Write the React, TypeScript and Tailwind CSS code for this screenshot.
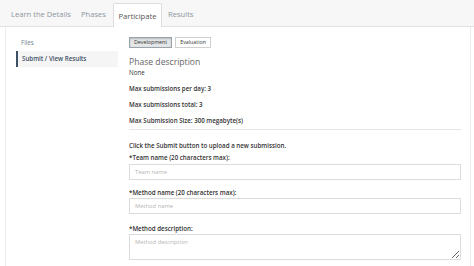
import React from 'react';

const tabs = [
  { label: 'Learn the Details', w: 'w-[70px]' },
  { label: 'Phases', w: 'w-[38px]' },
  { label: 'Participate', w: 'w-[49px]' },
  { label: 'Results', w: 'w-[40px]' },
];

const App: React.FC = () => {
  const active = 'Participate';

  return (
    <div className="w-[474px] h-[266px] overflow-hidden bg-white font-['Open_Sans',sans-serif] text-[#333]">
      {/* Tab strip */}
      <div className="h-[27px] bg-[#f7f7f7] border-b border-[#e0e0e0] flex items-end pl-[5px]">
        {tabs.map((t) =>
          t.label === active ? (
            <div
              key={t.label}
              className={`${t.w} h-[24px] pt-[2px] -mb-px bg-white border border-b-0 border-[#dddddd] rounded-t-[2px] flex items-center justify-center whitespace-nowrap text-[7.6px] text-[#555]`}
            >
              {t.label}
            </div>
          ) : (
            <div key={t.label} className={`${t.w} h-[24px] pt-[2px] flex items-center pl-[6px] whitespace-nowrap text-[7.6px] text-[#8c96a0]`}>
              {t.label}
            </div>
          )
        )}
      </div>

      {/* Panel */}
      <div className="flex ml-[5px] mr-[3px] h-[239px] border-l border-r border-[#ececec]">
        {/* Sidebar */}
        <div className="w-[112px] pl-[10px] pt-[8px] shrink-0">
          <div className="h-[16px] flex items-center pl-[5px] text-[6.2px] text-[#6f7f90]">Files</div>
          <div className="h-[16px] flex items-center pl-[4px] border-l-2 border-[#3d5166] bg-[#f5f5f5] text-[6.2px] font-semibold text-[#3d5166]">
            Submit / View Results
          </div>
        </div>

        {/* Main */}
        <div className="ml-[11px] w-[332px] pt-[10px] text-[6.2px] text-[#333]">
          <div className="flex gap-[3px]">
            <button className="h-[11px] px-[4px] border border-[#9aa3ab] bg-[#e4e6e8] shadow-[inset_0_1px_2px_rgba(0,0,0,0.2)] text-[5.3px] leading-none text-[#333]">
              Development
            </button>
            <button className="h-[11px] px-[4px] border border-[#d0d0d0] bg-white text-[5.3px] leading-none text-[#333]">
              Evaluation
            </button>
          </div>

          <div className="mt-[8px] text-[8.6px] leading-[12px] text-[#666]">Phase description</div>
          <div className="leading-[9px]">None</div>

          <div className="mt-[4px] h-[16px] flex items-center font-semibold">Max submissions per day: 3</div>
          <div className="h-[16px] flex items-center font-semibold">Max submissions total: 3</div>
          <div className="h-[16px] flex items-center font-semibold">Max Submission Size: 300 megabyte(s)</div>

          <div className="border-t border-[#e6e6e6]" />

          <div className="mt-[11px] leading-[9px] font-semibold">Click the Submit button to upload a new submission.</div>
          <div className="mt-[3px] leading-[9px] font-semibold">*Team name (20 characters max):</div>
          <input
            className="mt-[2px] w-full h-[16px] border border-[#dcdcdc] px-[5px] text-[5.8px] placeholder:text-[#b5b5b5] outline-none"
            placeholder="Team name"
          />

          <div className="mt-[8px] leading-[9px] font-semibold">*Method name (20 characters max):</div>
          <input
            className="mt-[1px] w-full h-[16px] border border-[#dcdcdc] px-[5px] text-[5.8px] placeholder:text-[#b5b5b5] outline-none"
            placeholder="Method name"
          />

          <div className="mt-[10px] leading-[9px] font-semibold">*Method description:</div>
          <textarea
            className="mt-[1px] block w-full h-[26px] border border-[#dcdcdc] px-[5px] py-[3px] text-[5.8px] leading-[8px] placeholder:text-[#b5b5b5] outline-none"
            placeholder="Method description"
          />
        </div>
      </div>
    </div>
  );
};

export default App;
